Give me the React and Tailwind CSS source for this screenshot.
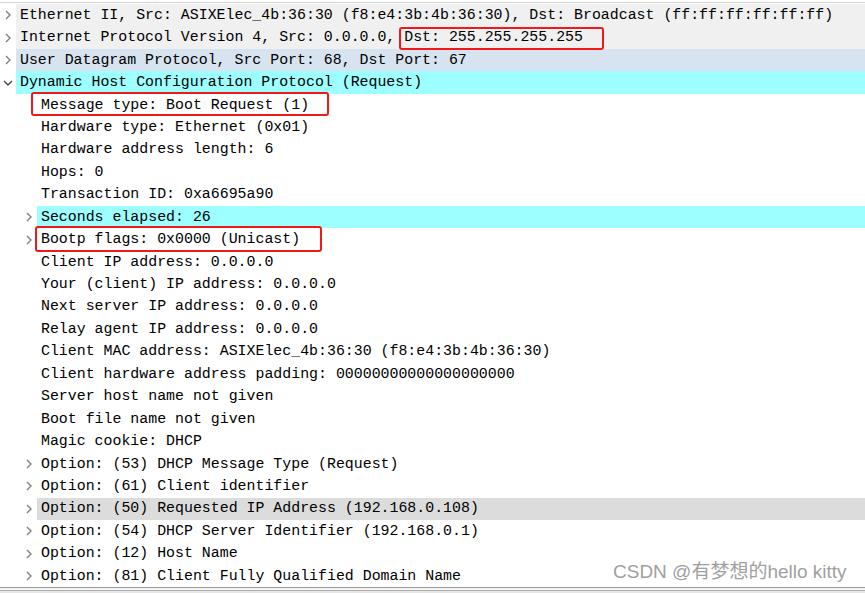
import React from 'react';

const rows = [
  { t: 'Ethernet II, Src: ASIXElec_4b:36:30 (f8:e4:3b:4b:36:30), Dst: Broadcast (ff:ff:ff:ff:ff:ff)', lv: 0, ex: 'r', bg: 'bg-[#f0f0f0]' },
  { t: 'Internet Protocol Version 4, Src: 0.0.0.0, Dst: 255.255.255.255', lv: 0, ex: 'r', bg: 'bg-[#f0f0f0]' },
  { t: 'User Datagram Protocol, Src Port: 68, Dst Port: 67', lv: 0, ex: 'r', bg: 'bg-[#d7e3ef]' },
  { t: 'Dynamic Host Configuration Protocol (Request)', lv: 0, ex: 'd', bg: 'bg-[#9dffff]' },
  { t: 'Message type: Boot Request (1)', lv: 1 },
  { t: 'Hardware type: Ethernet (0x01)', lv: 1 },
  { t: 'Hardware address length: 6', lv: 1 },
  { t: 'Hops: 0', lv: 1 },
  { t: 'Transaction ID: 0xa6695a90', lv: 1 },
  { t: 'Seconds elapsed: 26', lv: 1, ex: 'r', bg: 'bg-[#9dffff]' },
  { t: 'Bootp flags: 0x0000 (Unicast)', lv: 1, ex: 'r' },
  { t: 'Client IP address: 0.0.0.0', lv: 1 },
  { t: 'Your (client) IP address: 0.0.0.0', lv: 1 },
  { t: 'Next server IP address: 0.0.0.0', lv: 1 },
  { t: 'Relay agent IP address: 0.0.0.0', lv: 1 },
  { t: 'Client MAC address: ASIXElec_4b:36:30 (f8:e4:3b:4b:36:30)', lv: 1 },
  { t: 'Client hardware address padding: 00000000000000000000', lv: 1 },
  { t: 'Server host name not given', lv: 1 },
  { t: 'Boot file name not given', lv: 1 },
  { t: 'Magic cookie: DHCP', lv: 1 },
  { t: 'Option: (53) DHCP Message Type (Request)', lv: 1, ex: 'r' },
  { t: 'Option: (61) Client identifier', lv: 1, ex: 'r' },
  { t: 'Option: (50) Requested IP Address (192.168.0.108)', lv: 1, ex: 'r', bg: 'bg-[#dcdcdc]' },
  { t: 'Option: (54) DHCP Server Identifier (192.168.0.1)', lv: 1, ex: 'r' },
  { t: 'Option: (12) Host Name', lv: 1, ex: 'r' },
  { t: 'Option: (81) Client Fully Qualified Domain Name', lv: 1, ex: 'r' },
];

function Chevron({ dir }) {
  if (dir === 'd') {
    return (
      <svg width="12" height="12" viewBox="0 0 12 12" className="text-[#444]">
        <path d="M2 4 L6 8 L10 4" fill="none" stroke="currentColor" strokeWidth="1.4" />
      </svg>
    );
  }
  return (
    <svg width="12" height="12" viewBox="0 0 12 12" className="text-[#808080]">
      <path d="M4 2 L8 6 L4 10" fill="none" stroke="currentColor" strokeWidth="1.4" />
    </svg>
  );
}

function Row({ row }) {
  const indent = row.lv === 1 ? 'pl-[21px]' : 'pl-0';
  return (
    <div className={`flex h-[22.45px] items-center ${indent}`}>
      <div className="flex w-[16px] shrink-0 items-center justify-center">
        {row.ex && <Chevron dir={row.ex} />}
      </div>
      <div className={`flex h-full flex-1 items-center pl-[4px] ${row.bg || ''}`}>
        <span className="whitespace-pre text-[14.9px] leading-none text-black">{row.t}</span>
      </div>
    </div>
  );
}

export default function App() {
  return (
    <div className="relative h-[593px] w-[865px] overflow-hidden bg-white font-['Liberation_Mono',monospace]">
      <div className="mt-[2px] border-t border-[#d4d4d4] pt-[1px]">
        {rows.map((r, i) => (
          <Row key={i} row={r} />
        ))}
      </div>
      <div className="h-[3px] border-t border-[#9a9a9a] bg-[#f4f4f4]" />
      <div className="h-[10px] border-t border-[#b0b0b0] bg-[#e6e6e6]" />

      {/* red annotation boxes */}
      <div className="absolute left-[399px] top-[27px] h-[23px] w-[205px] rounded-[3px] border-2 border-[#f01818]" />
      <div className="absolute left-[31px] top-[92px] h-[24px] w-[298px] rounded-[3px] border-2 border-[#f01818]" />
      <div className="absolute left-[35px] top-[226px] h-[26px] w-[287px] rounded-[3px] border-2 border-[#f01818]" />

      {/* watermark */}
      <div className="absolute left-[613px] top-[562px] whitespace-nowrap text-[19px] leading-none text-[#a0a0a0] font-['Liberation_Sans','Noto_Sans_CJK_SC',sans-serif]">
        CSDN @有梦想的hello kitty
      </div>
    </div>
  );
}
